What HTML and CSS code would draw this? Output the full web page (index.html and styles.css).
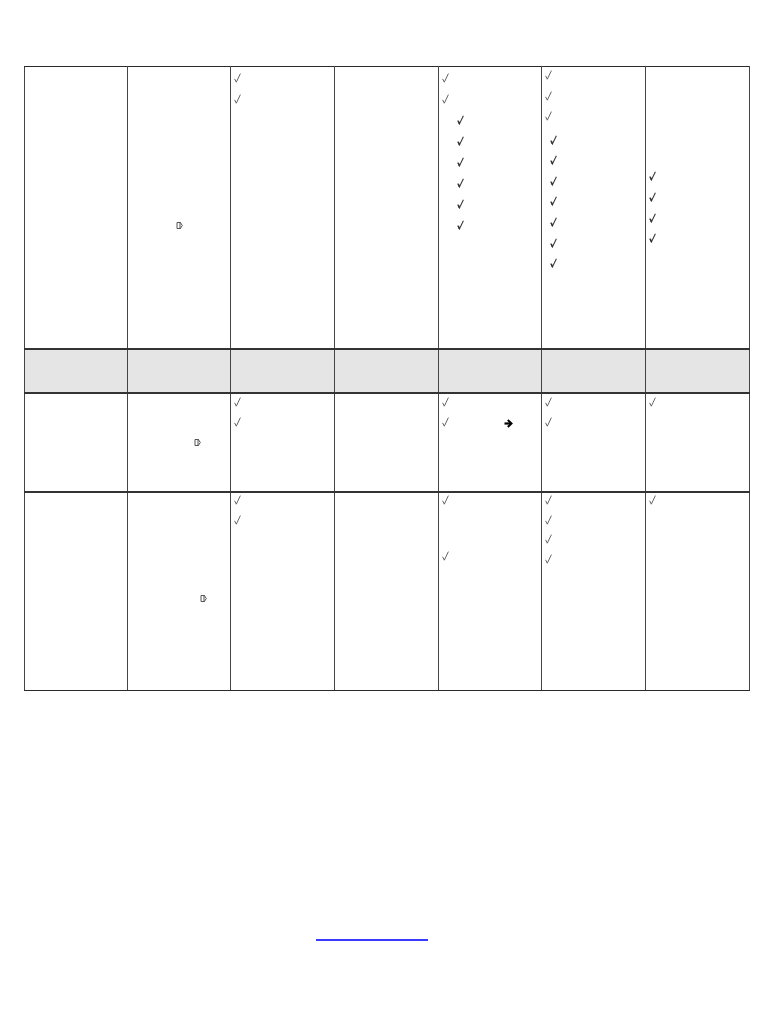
FILE: index.html
```html
<!DOCTYPE html>
<html lang="en">
<head>
<meta charset="utf-8">
<title>Feature matrix</title>
<link rel="stylesheet" href="styles.css">
</head>
<body>
<svg class="defs" width="0" height="0" aria-hidden="true">
  <defs>
    <symbol id="thin" viewBox="0 0 7 10"><path d="M0.6 5.8 L2.3 9.2 L6.4 0.6" fill="none" stroke="#555" stroke-width="0.9"/></symbol>
    <symbol id="dark" viewBox="0 0 7 10"><path d="M0.8 5.6 L2.4 9 L6.4 0.8" fill="none" stroke="#3a3a3a" stroke-width="1.1"/><path d="M1.3 6 L2.4 8.6" stroke="#333" stroke-width="1.5"/></symbol>
    <symbol id="tab" viewBox="0 0 7 9"><path d="M1 1.5 H4 V7.5 H1 Z M4 1 L6.3 4.5 L4 8" fill="none" stroke="#555" stroke-width="1"/></symbol>
    <symbol id="arr" viewBox="0 0 9 9"><path d="M0.5 4.5 H6.5" stroke="#000" stroke-width="2.2"/><path d="M3.8 1 L7.5 4.5 L3.8 8" fill="none" stroke="#000" stroke-width="2"/></symbol>
  </defs>
</svg>
<main class="page">
  <table class="matrix">
    <colgroup>
      <col class="w103"><col class="w103"><col class="w104"><col class="w104"><col class="w103"><col class="w104"><col class="w104">
    </colgroup>
    <tr class="r1">
      <td></td>
      <td><div class="tab tab-1"><svg class="ico"><use href="#tab"/></svg></div></td>
      <td><div class="checks lh21">
        <div class="ln"><svg class="ck"><use href="#thin"/></svg></div>
        <div class="ln"><svg class="ck"><use href="#thin"/></svg></div>
      </div></td>
      <td></td>
      <td><div class="checks lh21">
        <div class="ln"><svg class="ck"><use href="#thin"/></svg></div>
        <div class="ln"><svg class="ck"><use href="#thin"/></svg></div>
        <div class="ln in15"><svg class="ck"><use href="#dark"/></svg></div>
        <div class="ln in15"><svg class="ck"><use href="#dark"/></svg></div>
        <div class="ln in15"><svg class="ck"><use href="#dark"/></svg></div>
        <div class="ln in15"><svg class="ck"><use href="#dark"/></svg></div>
        <div class="ln in15"><svg class="ck"><use href="#dark"/></svg></div>
        <div class="ln in15"><svg class="ck"><use href="#dark"/></svg></div>
      </div></td>
      <td><div class="checks lh205 up2">
        <div class="ln"><svg class="ck"><use href="#thin"/></svg></div>
        <div class="ln"><svg class="ck"><use href="#thin"/></svg></div>
        <div class="ln"><svg class="ck"><use href="#thin"/></svg></div>
        <div class="ln in5 gap"><svg class="ck"><use href="#dark"/></svg></div>
        <div class="ln in5"><svg class="ck"><use href="#dark"/></svg></div>
        <div class="ln in5"><svg class="ck"><use href="#dark"/></svg></div>
        <div class="ln in5"><svg class="ck"><use href="#dark"/></svg></div>
        <div class="ln in5"><svg class="ck"><use href="#dark"/></svg></div>
        <div class="ln in5"><svg class="ck"><use href="#dark"/></svg></div>
        <div class="ln in5"><svg class="ck"><use href="#dark"/></svg></div>
      </div></td>
      <td class="mid"><div class="checks lh205">
        <div class="ln"><svg class="ck"><use href="#dark"/></svg></div>
        <div class="ln"><svg class="ck"><use href="#dark"/></svg></div>
        <div class="ln"><svg class="ck"><use href="#dark"/></svg></div>
        <div class="ln"><svg class="ck"><use href="#dark"/></svg></div>
      </div></td>
    </tr>
    <tr class="r2">
      <td></td><td></td><td></td><td></td><td></td><td></td><td></td>
    </tr>
    <tr class="r3">
      <td></td>
      <td><div class="tab tab-3"><svg class="ico"><use href="#tab"/></svg></div></td>
      <td><div class="checks lh20 up2">
        <div class="ln"><svg class="ck"><use href="#thin"/></svg></div>
        <div class="ln"><svg class="ck"><use href="#thin"/></svg></div>
      </div></td>
      <td></td>
      <td><div class="checks lh20 up2">
        <div class="ln"><svg class="ck"><use href="#thin"/></svg></div>
        <div class="ln"><svg class="ck"><use href="#thin"/></svg><span class="spacer"></span><svg class="arrow"><use href="#arr"/></svg></div>
      </div></td>
      <td><div class="checks lh20 up2">
        <div class="ln"><svg class="ck"><use href="#thin"/></svg></div>
        <div class="ln"><svg class="ck"><use href="#thin"/></svg></div>
      </div></td>
      <td><div class="checks lh20 up2">
        <div class="ln"><svg class="ck"><use href="#thin"/></svg></div>
      </div></td>
    </tr>
    <tr class="r4">
      <td></td>
      <td><div class="tab tab-4"><svg class="ico"><use href="#tab"/></svg></div></td>
      <td><div class="checks lh195 up2">
        <div class="ln"><svg class="ck"><use href="#thin"/></svg></div>
        <div class="ln"><svg class="ck"><use href="#thin"/></svg></div>
      </div></td>
      <td></td>
      <td><div class="checks lh19 up2">
        <div class="ln"><svg class="ck"><use href="#thin"/></svg></div>
        <div class="ln"></div>
        <div class="ln"></div>
        <div class="ln"><svg class="ck"><use href="#thin"/></svg></div>
      </div></td>
      <td><div class="checks lh195 up2">
        <div class="ln"><svg class="ck"><use href="#thin"/></svg></div>
        <div class="ln"><svg class="ck"><use href="#thin"/></svg></div>
        <div class="ln"><svg class="ck"><use href="#thin"/></svg></div>
        <div class="ln"><svg class="ck"><use href="#thin"/></svg></div>
      </div></td>
      <td><div class="checks lh195 up2">
        <div class="ln"><svg class="ck"><use href="#thin"/></svg></div>
      </div></td>
    </tr>
  </table>
  <footer class="foot">
    <a class="link" href="#" aria-label="More information"></a>
  </footer>
</main>
</body>
</html>
```

FILE: styles.css
```css
html, body {
  margin: 0;
  padding: 0;
  background: #ffffff;
  font-family: "Liberation Sans", Arial, sans-serif;
}

.defs {
  position: absolute;
  width: 0;
  height: 0;
  overflow: hidden;
}

.page {
  padding: 66px 0 0 24px;
}

.matrix {
  border-collapse: collapse;
  table-layout: fixed;
  width: 725px;
  border: 1px solid #2a2a2a;
}

.matrix col.w103 { width: 103px; }
.matrix col.w104 { width: 104px; }

.matrix td {
  border-left: 1px solid #444;
  border-right: 1px solid #444;
  border-top: 2px solid #333;
  border-bottom: 2px solid #333;
  padding: 0 0 0 3px;
  vertical-align: top;
  box-sizing: border-box;
}

.r1 td { height: 282px; border-top: 1px solid #2a2a2a; }
.r2 td { height: 44px; background: #e5e5e5; }
.r3 td { height: 99px; }
.r4 td { height: 199px; border-bottom: 1px solid #2a2a2a; }

.matrix td.mid {
  vertical-align: middle;
}

.checks {
  display: flex;
  flex-direction: column;
}

.up2 { margin-top: -2px; }

.ln {
  display: flex;
  align-items: center;
}

.lh21 .ln { height: 21px; }
.lh205 .ln { height: 20.6px; }
.lh20 .ln { height: 20px; }
.lh195 .ln { height: 19.5px; }
.lh19 .ln { height: 18.8px; }

.in15 { padding-left: 15px; }
.in5 { padding-left: 5px; }
.gap { margin-top: 2.5px; }

.ck {
  width: 7px;
  height: 10px;
  flex: none;
}

.spacer {
  width: 55px;
  flex: none;
}

.arrow {
  width: 9px;
  height: 9px;
  flex: none;
  margin-top: 4px;
}

.tab {
  display: flex;
}

.ico {
  width: 7px;
  height: 9px;
}

.tab-1 { padding: 154px 0 0 45px; }
.tab-3 { padding: 44px 0 0 63px; }
.tab-4 { padding: 101px 0 0 69px; }

.foot {
  padding: 248px 0 0 292px;
}

.link {
  display: block;
  width: 112px;
  height: 2px;
  background: #3a3aff;
}
```
